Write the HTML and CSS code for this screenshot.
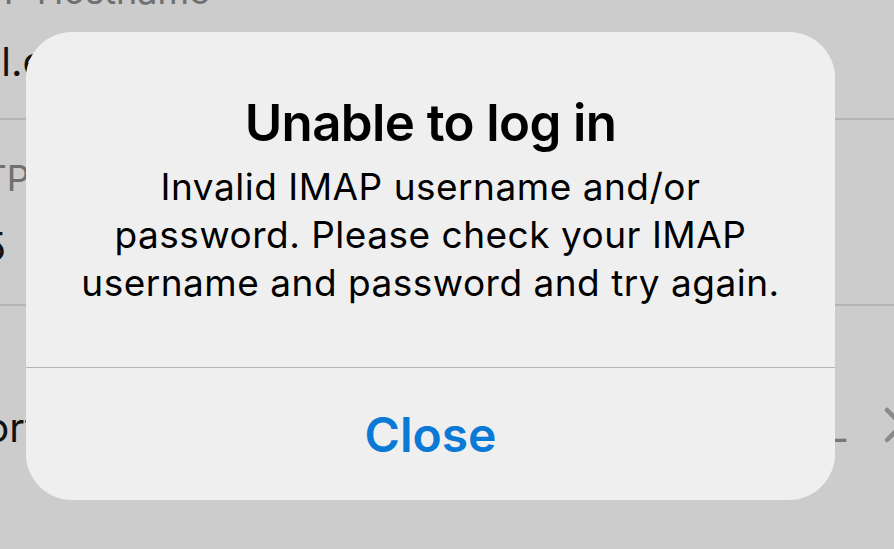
FILE: index.html
```html
<!DOCTYPE html>
<html>
<head>
<meta charset="utf-8">
<link rel="stylesheet" href="styles.css">
</head>
<body>
<div class="settings">
  <div class="row row-host">
    <div class="label label-host">SMTP Hostname</div>
    <div class="value value-host">mail.example.com</div>
  </div>
  <div class="row row-port">
    <div class="label label-port">SMTP Port</div>
    <div class="value value-port">465</div>
  </div>
  <div class="row row-sec">
    <div class="value value-sec">Port</div>
    <div class="trail">
      <span class="trail-text">SSL</span>
      <svg class="chev" width="30" height="40" viewBox="0 0 30 40"><path d="M3 3 L18 18 L3 33" fill="none" stroke="#8a8a8a" stroke-width="4.5" stroke-linecap="round" stroke-linejoin="round"/></svg>
    </div>
  </div>
</div>

<div class="alert" role="alertdialog">
  <div class="alert-body">
    <h1 class="alert-title">Unable to log in</h1>
    <p class="alert-msg">Invalid IMAP username and/or<br>password. Please check your IMAP<br>username and password and try again.</p>
  </div>
  <button class="alert-btn">Close</button>
</div>
</body>
</html>
```
FILE: styles.css
```css
html, body {
  margin: 0;
  padding: 0;
}
body {
  width: 894px;
  height: 549px;
  overflow: hidden;
  background: #cccccc;
  font-family: Inter, "Noto Sans", "Liberation Sans", sans-serif;
  position: relative;
}

.settings {
  display: flex;
  flex-direction: column;
}
.row {
  border-bottom: 2px solid #b4b4b4;
  display: flex;
  flex-direction: column;
}
.row-host {
  height: 119px;
  margin-top: -1px;
}
.row-port {
  height: 184px;
}
.row-sec {
  flex-direction: row;
  justify-content: space-between;
  align-items: center;
  height: 230px;
  border-bottom: none;
}
.label {
  font-size: 36px;
  color: #707070;
  white-space: nowrap;
}
.value {
  font-size: 40px;
  color: #111;
  white-space: nowrap;
}
.label-host {
  width: 210px;
  text-align: right;
  direction: rtl;
  margin-top: -30px;
  line-height: 44px;
}
.value-host {
  margin-left: -66px;
  margin-top: 24px;
}
.label-port {
  margin-left: -72px;
  margin-top: 38px;
  line-height: 40px;
}
.value-port {
  width: 6px;
  direction: rtl;
  text-align: right;
  margin-top: 24px;
}
.value-sec {
  margin-left: -40px;
  margin-top: 12px;
}
.trail {
  display: flex;
  align-items: center;
  gap: 36px;
  margin-right: -20px;
  margin-top: 12px;
}
.trail-text {
  font-size: 40px;
  color: #777;
}

.alert {
  position: absolute;
  left: 26px;
  top: 32px;
  width: 809px;
  height: 468px;
  background: #efefef;
  border-radius: 46px;
  display: flex;
  flex-direction: column;
  overflow: hidden;
}
.alert-body {
  height: 335px;
  border-bottom: 1px solid #b3b3b3;
  display: flex;
  flex-direction: column;
  align-items: center;
  text-align: center;
}
.alert-title {
  margin: 60px 0 0;
  font-size: 51px;
  font-weight: 600;
  line-height: 62px;
  color: #000;
  letter-spacing: -0.6px;
}
.alert-msg {
  margin: 9px 0 0;
  font-size: 37px;
  line-height: 48px;
  color: #000;
  font-weight: 400;
  letter-spacing: 0.5px;
}
.alert-btn {
  flex: 1;
  border: none;
  background: transparent;
  font-family: inherit;
  font-size: 48px;
  font-weight: 600;
  color: #0a7ad6;
  padding: 0;
  margin-top: 0;
}
```
